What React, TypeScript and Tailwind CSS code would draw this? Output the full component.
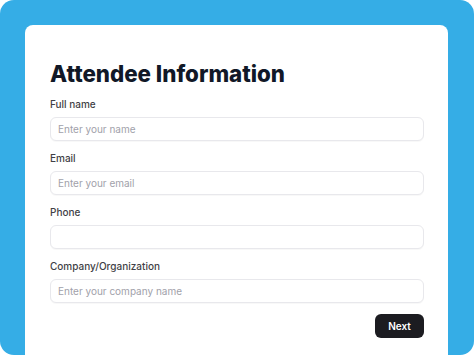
export default function App() {
  const fields = [
    { label: "Full name", placeholder: "Enter your name" },
    { label: "Email", placeholder: "Enter your email" },
    { label: "Phone", placeholder: "" },
    { label: "Company/Organization", placeholder: "Enter your company name" },
  ];

  return (
    <div className="h-[355px] w-[474px] overflow-hidden rounded-[14px] bg-[#35ade6] pl-[25px] pt-[25px] font-['Inter',sans-serif]">
      <div className="h-[360px] w-[423px] rounded-[8px] bg-white pl-[25px] pr-[24px] pt-[38px]">
        <h1 className="text-[22.3px] font-extrabold leading-none text-[#111827]">
          Attendee Information
        </h1>

        <form className="mt-[14px] flex flex-col gap-[12px]">
          {fields.map((f) => (
            <div key={f.label} className="flex flex-col gap-[8px]">
              <label className="text-[10px] font-medium leading-none text-[#3f3f46]">
                {f.label}
              </label>
              <input
                type="text"
                placeholder={f.placeholder}
                className="h-[24px] w-full rounded-[6px] border border-[#e8e8ec] bg-white px-[7px] text-[10px] text-[#111827] shadow-[0_1px_1px_rgba(0,0,0,0.03)] outline-none placeholder:text-[#a1a1aa]"
              />
            </div>
          ))}
        </form>

        <div className="mt-[11px] flex justify-end">
          <button className="h-[24px] w-[49px] rounded-[6px] bg-[#1c1c21] text-[10px] font-semibold text-white">
            Next
          </button>
        </div>
      </div>
    </div>
  );
}
